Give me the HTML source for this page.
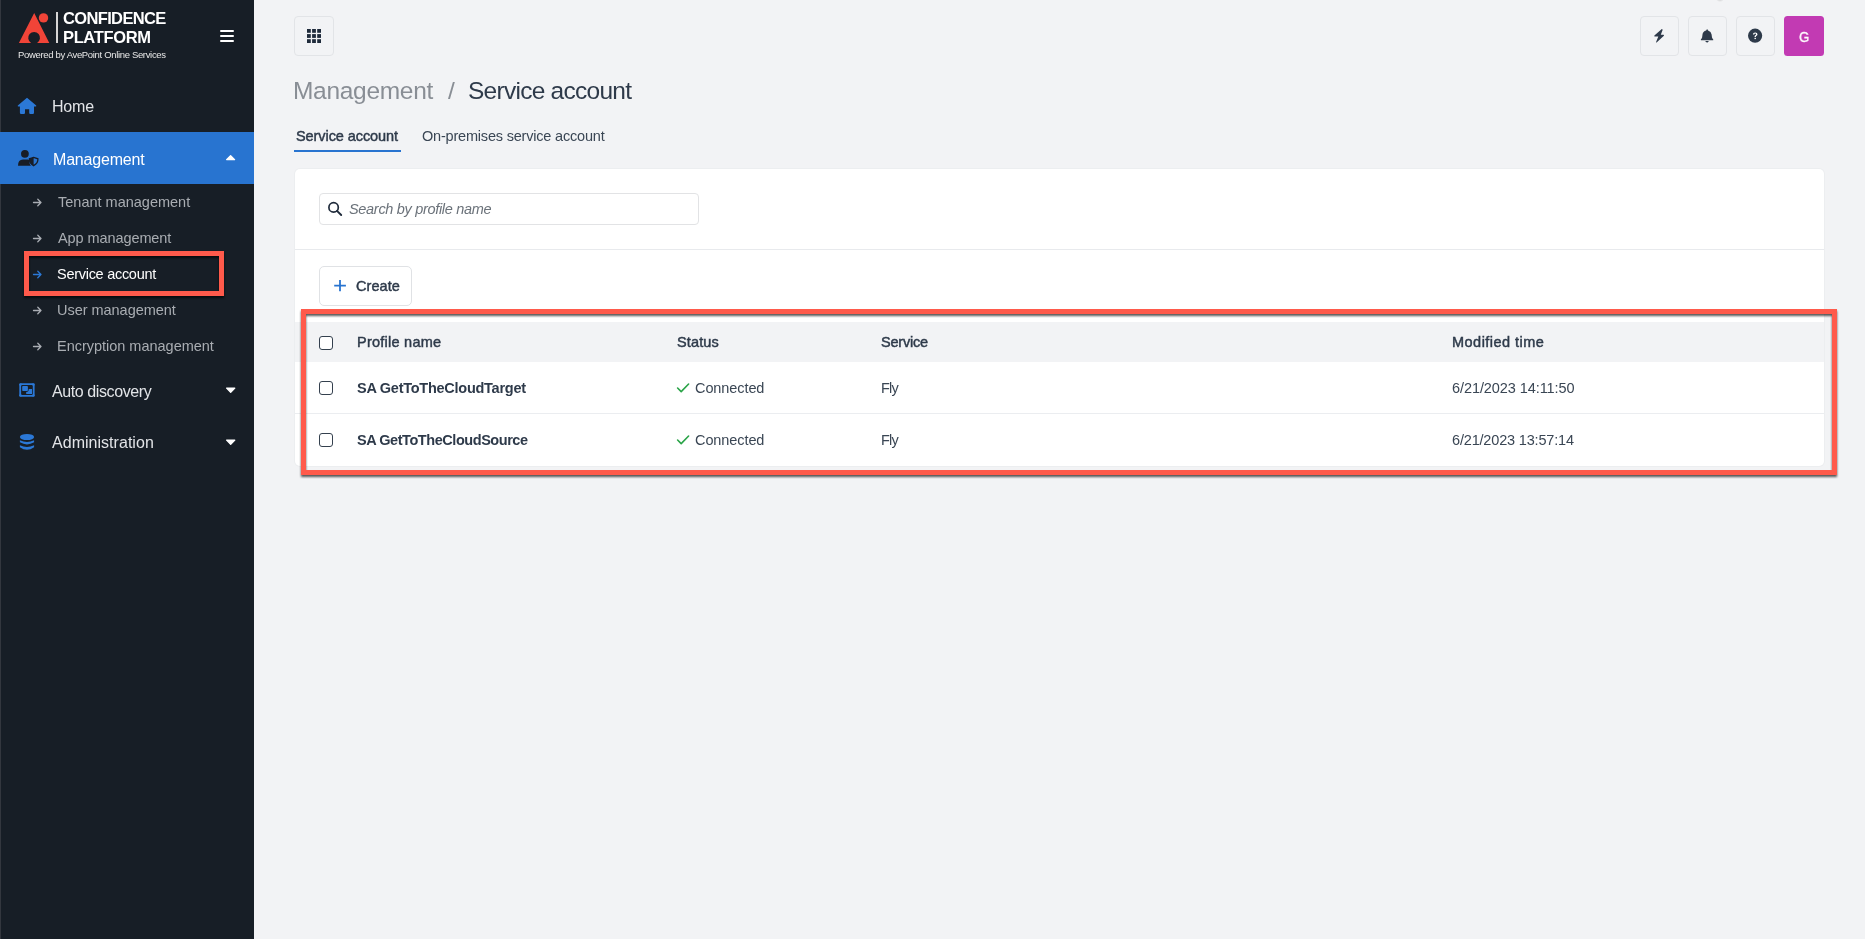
<!DOCTYPE html>
<html><head><meta charset="utf-8">
<style>
*{box-sizing:border-box;margin:0;padding:0}
html,body{width:1865px;height:939px;overflow:hidden;background:#f2f3f5;font-family:"Liberation Sans",sans-serif;color:#2e3a4a}
.abs{position:absolute}
.t{position:absolute;white-space:nowrap;line-height:1;will-change:transform}
.btn{position:absolute;border:1px solid #e2e4e7;border-radius:4px;background:#f2f3f5}
.cb{position:absolute;width:14px;height:14px;border:1.4px solid #34404e;border-radius:3px;background:#fff}
svg{position:absolute;overflow:visible}
</style></head><body>
<div class="abs" style="left:0;top:0;width:254px;height:939px;background:#171e26"></div>
<div class="abs" style="left:0;top:0;width:1px;height:939px;background:#33373e"></div>

<!-- logo -->
<svg style="left:0;top:0" width="60" height="50">
  <path d="M34.2 13.1 L49.3 42.9 H37.1 A5.9 5.9 0 1 0 31.1 42.9 H18.9 Z" fill="#f04438"/>
  <circle cx="43.5" cy="17.9" r="4.7" fill="#f04438"/>
</svg>
<div class="abs" style="left:56px;top:12px;width:1.8px;height:31px;background:#d6d6d6"></div>
<div class="t" style="left:63.4px;top:9.7px;font-size:16.5px;letter-spacing:-0.644px;color:#ffffff;font-weight:bold;">CONFIDENCE</div>
<div class="t" style="left:63.4px;top:28.5px;font-size:16.5px;letter-spacing:-0.357px;color:#ffffff;font-weight:bold;">PLATFORM</div>
<div class="t" style="left:17.7px;top:49.9px;font-size:9.5px;letter-spacing:-0.332px;color:#e8e8e8;">Powered by AvePoint Online Services</div>
<!-- hamburger -->
<div class="abs" style="left:220px;top:30px;width:14px;height:2px;border-radius:1px;background:#fff"></div>
<div class="abs" style="left:220px;top:35px;width:14px;height:2px;border-radius:1px;background:#fff"></div>
<div class="abs" style="left:220px;top:40px;width:14px;height:2px;border-radius:1px;background:#fff"></div>

<!-- home icon -->
<svg style="left:0;top:0" width="60" height="130">
  <path d="M27 97.8 L36.2 105.6 Q36.6 106.4 35.6 106.6 L34 106.6 V112.8 Q34 114 32.8 114 H30.3 Q29.2 114 29.2 112.8 V109.2 H25 V112.8 Q25 114 23.9 114 H21.1 Q19.9 114 19.9 112.8 V106.6 L18.4 106.6 Q17.4 106.4 17.8 105.6 Z" fill="#2b78d6"/>
</svg>
<div class="t" style="left:51.8px;top:99.0px;font-size:16px;letter-spacing:-0.2px;color:#e2e4e7;">Home</div>

<div class="abs" style="left:0;top:132px;width:254px;height:52px;background:#2874d0"></div>
<!-- management icon -->
<svg style="left:0;top:0" width="60" height="200">
  <circle cx="24.9" cy="153.8" r="3.9" fill="#181d26"/>
  <path d="M18 165.7 Q18 159.4 23 159.4 H27.5 Q28.8 159.4 29.4 160 L29.6 163.2 Q30 164.8 31 165.7 Z" fill="#181d26"/>
  <path d="M33.6 157.4 L37.9 158.8 Q38.2 163.4 33.6 165.7 Q29.2 163.4 29.4 158.8 Z" fill="none" stroke="#181d26" stroke-width="1.3"/>
  <path d="M33.6 157.4 L29.4 158.8 Q29.2 163.4 33.6 165.7 Z" fill="#181d26"/>
</svg>
<div class="t" style="left:53px;top:151.5px;font-size:16px;letter-spacing:-0.189px;color:#ffffff;">Management</div>
<svg style="left:0;top:0" width="254" height="200">
  <path d="M226.6 159.6 L230.6 155.6 L234.6 159.6 Z" fill="#fff" stroke="#fff" stroke-width="1.3" stroke-linejoin="round"/>
</svg>

<!-- sub arrows -->
<svg style="left:0;top:0" width="60" height="360">
  <g fill="none" stroke-width="1.3" stroke-linecap="round" stroke-linejoin="round">
    <path d="M33.5 202.5 H41 M37.8 199.3 L41 202.5 L37.8 205.7" stroke="#a9adb3"/>
    <path d="M33.5 238.5 H41 M37.8 235.3 L41 238.5 L37.8 241.7" stroke="#a9adb3"/>
    <path d="M33.5 274.5 H41 M37.8 271.3 L41 274.5 L37.8 277.7" stroke="#2b78d6"/>
    <path d="M33.5 310.5 H41 M37.8 307.3 L41 310.5 L37.8 313.7" stroke="#a9adb3"/>
    <path d="M33.5 346.5 H41 M37.8 343.3 L41 346.5 L37.8 349.7" stroke="#a9adb3"/>
  </g>
</svg>
<div class="t" style="left:58.3px;top:194.7px;font-size:14.5px;letter-spacing:0.0px;color:#a9adb2;">Tenant management</div>
<div class="t" style="left:58.3px;top:231.1px;font-size:14.5px;letter-spacing:-0.085px;color:#a9adb2;">App management</div>
<div class="t" style="left:57.3px;top:267.0px;font-size:14.5px;letter-spacing:-0.279px;color:#ffffff;">Service account</div>
<div class="t" style="left:57.3px;top:303.0px;font-size:14.5px;letter-spacing:-0.029px;color:#a9adb2;">User management</div>
<div class="t" style="left:57.3px;top:339.2px;font-size:14.5px;letter-spacing:-0.015px;color:#a9adb2;">Encryption management</div>

<!-- auto discovery icon -->
<svg style="left:0;top:0" width="60" height="460">
  <rect x="20.2" y="384.2" width="13.5" height="11.6" rx="1" fill="none" stroke="#2b78d6" stroke-width="1.8"/>
  <circle cx="20.5" cy="384.5" r="1.35" fill="#2b78d6"/><circle cx="33.4" cy="384.5" r="1.35" fill="#2b78d6"/>
  <circle cx="20.5" cy="395.5" r="1.35" fill="#2b78d6"/><circle cx="33.4" cy="395.5" r="1.35" fill="#2b78d6"/>
  <rect x="22.2" y="386.1" width="5.7" height="4.9" rx="0.8" fill="#2b78d6"/>
  <path d="M28.8 389 H32 V394 H26.2 V392 Q28.8 392 28.8 389 Z" fill="#2b78d6"/>
  <!-- database -->
  <ellipse cx="27" cy="437" rx="7.1" ry="3.1" fill="#2b78d6"/>
  <path d="M19.9 440.3 Q27 443.8 34.1 440.3 V442.3 Q27 446.6 19.9 442.3 Z" fill="#2b78d6"/>
  <path d="M19.9 445.3 Q27 448.8 34.1 445.3 V447.2 Q27 452.2 19.9 447.2 Z" fill="#2b78d6"/>
</svg>
<div class="t" style="left:52px;top:383.5px;font-size:16px;letter-spacing:-0.408px;color:#e2e4e7;">Auto discovery</div>
<div class="t" style="left:52px;top:435.2px;font-size:16px;letter-spacing:0.031px;color:#e2e4e7;">Administration</div>
<svg style="left:0;top:0" width="254" height="460">
  <path d="M226.6 388.1 L230.7 392.4 L234.8 388.1 Z" fill="#fff" stroke="#fff" stroke-width="1.3" stroke-linejoin="round"/>
  <path d="M226.6 440.1 L230.7 444.4 L234.8 440.1 Z" fill="#fff" stroke="#fff" stroke-width="1.3" stroke-linejoin="round"/>
</svg>

<!-- sidebar red box -->
<div class="abs" style="left:24px;top:251px;width:200px;height:45px;border:5px solid #ff5a4b;filter:drop-shadow(0 2.5px 1px rgba(0,0,0,.65))"></div>

<!-- top bar -->
<div class="btn" style="left:294px;top:16px;width:40px;height:40px"></div>
<svg style="left:0;top:0" width="340" height="60">
  <g fill="#1f2b3b">
    <rect x="307" y="29" width="3.8" height="3.8"/><rect x="312.1" y="29" width="3.8" height="3.8"/><rect x="317.2" y="29" width="3.8" height="3.8"/>
    <rect x="307" y="34.1" width="3.8" height="3.8"/><rect x="312.1" y="34.1" width="3.8" height="3.8"/><rect x="317.2" y="34.1" width="3.8" height="3.8"/>
    <rect x="307" y="39.2" width="3.8" height="3.8"/><rect x="312.1" y="39.2" width="3.8" height="3.8"/><rect x="317.2" y="39.2" width="3.8" height="3.8"/>
  </g>
</svg>
<div class="btn" style="left:1639.5px;top:16px;width:39px;height:39.5px"></div>
<div class="btn" style="left:1687.5px;top:16px;width:39px;height:39.5px"></div>
<div class="btn" style="left:1735.5px;top:16px;width:39px;height:39.5px"></div>
<svg style="left:1600px;top:0" width="260" height="60">
  <g fill="#2e3a4a">
    <path d="M61.8 29 Q62.9 29.3 62.6 30 L60.8 34.7 L63.4 34.7 Q64.3 34.9 63.9 35.7 L56.6 42.4 Q55.9 42.8 56.1 42 L58.3 36.6 L54.8 36.6 Q53.9 36.4 54.4 35.6 Z"/>
    <path d="M107.1 28.9 L108.1 30.6 Q111.2 31.6 111.6 34.5 L112 37.6 Q112.3 38.8 113.2 39.3 V40.2 H100.9 V39.3 Q101.8 38.8 102.1 37.6 L102.5 34.5 Q102.9 31.6 106.1 30.6 Z"/>
    <path d="M105 41.1 H109.1 L107.1 42.8 Z"/>
    <circle cx="155.1" cy="35.7" r="7.1"/>
  </g>
  <g fill="#fff">
    <path d="M152.9 34.6 Q152.9 32.4 155.2 32.4 Q157.5 32.4 157.5 34.3 Q157.5 35.5 156.3 36.1 Q155.9 36.4 155.9 36.9 H154.5 Q154.5 35.7 155.3 35.2 Q156.1 34.8 156.1 34.2 Q156.1 33.6 155.2 33.6 Q154.3 33.6 154.3 34.6 Z"/>
    <rect x="154.5" y="37.8" width="1.4" height="1.3"/>
  </g>
</svg>
<div class="abs" style="left:1784px;top:16px;width:40px;height:40px;background:#c23ab3;border-radius:3.5px"></div>
<div class="t" style="left:1799.4px;top:28.8px;font-size:15px;color:#fff;-webkit-text-stroke:0.3px #fff;transform:scaleX(0.88);transform-origin:0 0">G</div>

<!-- breadcrumb -->
<div class="t" style="left:293.3px;top:78.7px;font-size:24.5px;letter-spacing:-0.3px;color:#898e95;">Management</div>
<div class="t" style="left:448px;top:78.7px;font-size:24.5px;color:#898e95">/</div>
<div class="t" style="left:468.2px;top:78.7px;font-size:24.5px;letter-spacing:-0.736px;color:#2e3a4a;">Service account</div>

<!-- tabs -->
<div class="t" style="left:295.5px;top:129.0px;font-size:14.5px;letter-spacing:-0.079px;color:#2e3a4a;-webkit-text-stroke:0.45px #2e3a4a;">Service account</div>
<div class="t" style="left:422.4px;top:129.0px;font-size:14.5px;letter-spacing:-0.196px;color:#3a4654;">On-premises service account</div>
<div class="abs" style="left:294px;top:150px;width:107px;height:2px;background:#2874d0"></div>

<!-- card -->
<div class="abs" style="left:295px;top:169px;width:1529px;height:297px;background:#fff;border-radius:5px;box-shadow:0 0 0 1px #eceef0"></div>
<div class="abs" style="left:319px;top:193px;width:380px;height:32px;border:1px solid #e2e3e5;border-radius:4px;background:#fff"></div>
<svg style="left:0;top:0" width="360" height="230">
  <circle cx="333.6" cy="207.4" r="4.7" fill="none" stroke="#1f2b3b" stroke-width="1.7"/>
  <path d="M337 210.8 L341.2 215" stroke="#1f2b3b" stroke-width="1.9" stroke-linecap="round"/>
</svg>
<div class="t" style="left:349.3px;top:201.6px;font-size:14.5px;letter-spacing:-0.31px;color:#6b727a;font-style:italic;">Search by profile name</div>
<div class="abs" style="left:295px;top:249px;width:1529px;height:1px;background:#e8eaed"></div>
<div class="abs" style="left:319px;top:266px;width:93px;height:40px;border:1px solid #e0e2e5;border-radius:5px;background:#fff"></div>
<svg style="left:0;top:0" width="360" height="310">
  <path d="M340 280 V291.2 M334.2 285.6 H345.9" stroke="#2874d0" stroke-width="1.8"/>
</svg>
<div class="t" style="left:355.8px;top:278.7px;font-size:14.5px;letter-spacing:0.06px;color:#2e3a4a;-webkit-text-stroke:0.45px #2e3a4a;">Create</div>

<!-- table -->
<div class="abs" style="left:295px;top:322px;width:1529px;height:40px;background:#f2f3f5"></div>
<div class="abs" style="left:295px;top:413px;width:1529px;height:1px;background:#ebedf0"></div>
<div class="cb" style="left:319px;top:336px"></div>
<div class="cb" style="left:319px;top:381px"></div>
<div class="cb" style="left:319px;top:433px"></div>
<div class="t" style="left:356.5px;top:334.7px;font-size:14.5px;letter-spacing:0.245px;color:#2e3a4a;-webkit-text-stroke:0.45px #2e3a4a;">Profile name</div>
<div class="t" style="left:676.5px;top:334.7px;font-size:14.5px;letter-spacing:0.14px;color:#2e3a4a;-webkit-text-stroke:0.45px #2e3a4a;">Status</div>
<div class="t" style="left:880.5px;top:334.7px;font-size:14.5px;letter-spacing:-0.217px;color:#2e3a4a;-webkit-text-stroke:0.45px #2e3a4a;">Service</div>
<div class="t" style="left:1452.4px;top:334.7px;font-size:14.5px;letter-spacing:0.475px;color:#2e3a4a;-webkit-text-stroke:0.45px #2e3a4a;">Modified time</div>
<div class="t" style="left:356.5px;top:380.7px;font-size:14.5px;letter-spacing:-0.262px;color:#2e3a4a;font-weight:bold;">SA GetToTheCloudTarget</div>
<div class="t" style="left:356.5px;top:432.7px;font-size:14.5px;letter-spacing:-0.448px;color:#2e3a4a;font-weight:bold;">SA GetToTheCloudSource</div>
<div class="t" style="left:694.7px;top:380.7px;font-size:14.5px;letter-spacing:-0.088px;color:#3a4654;">Connected</div>
<div class="t" style="left:694.7px;top:432.7px;font-size:14.5px;letter-spacing:-0.088px;color:#3a4654;">Connected</div>
<div class="t" style="left:880.5px;top:380.7px;font-size:14.5px;letter-spacing:-0.75px;color:#3a4654;">Fly</div>
<div class="t" style="left:880.5px;top:432.7px;font-size:14.5px;letter-spacing:-0.75px;color:#3a4654;">Fly</div>
<div class="t" style="left:1452.4px;top:380.7px;font-size:14.5px;letter-spacing:-0.076px;color:#3a4654;">6/21/2023 14:11:50</div>
<div class="t" style="left:1452.4px;top:432.7px;font-size:14.5px;letter-spacing:-0.176px;color:#3a4654;">6/21/2023 13:57:14</div>
<svg style="left:0;top:0" width="700" height="460">
  <path d="M677.6 388 L681.2 391.6 L688.6 384" fill="none" stroke="#2aa448" stroke-width="1.6" stroke-linecap="round" stroke-linejoin="round"/>
  <path d="M677.6 440 L681.2 443.6 L688.6 436" fill="none" stroke="#2aa448" stroke-width="1.6" stroke-linecap="round" stroke-linejoin="round"/>
</svg>

<!-- table red box -->
<div class="abs" style="left:301px;top:309px;width:1536px;height:166px;border:5px solid #ff5a4b;filter:drop-shadow(0 2.5px 1px rgba(0,0,0,.65))"></div>
<div class="abs" style="left:1716px;top:-3px;width:8px;height:5px;border-radius:50%;background:radial-gradient(#cfcfd0,rgba(242,243,245,0) 70%)"></div>
</body></html>
